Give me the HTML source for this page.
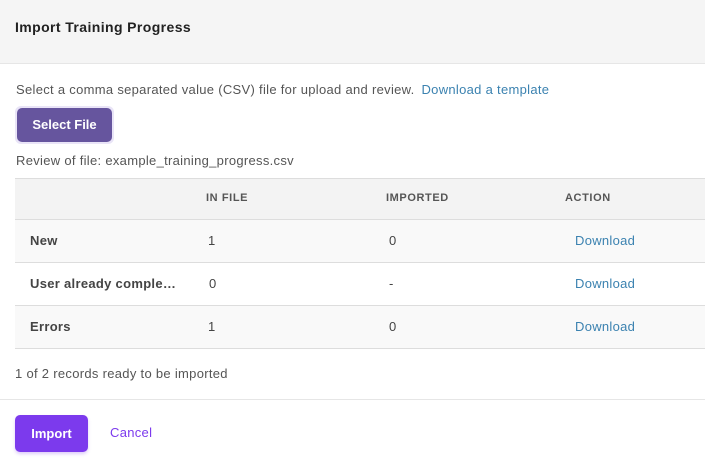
<!DOCTYPE html>
<html><head><style>
*{margin:0;padding:0;box-sizing:border-box}
body{width:705px;height:466px;overflow:hidden;background:#fff;font-family:"Liberation Sans",sans-serif;color:#444;position:relative;font-size:13px;letter-spacing:.3px}
.abs{position:absolute;white-space:nowrap}
.hdr{position:absolute;left:0;top:0;width:705px;height:64px;background:#f5f5f5;border-bottom:1px solid #e6e6e6}
.row{position:absolute;left:15px;width:690px;border-bottom:1px solid #ddd}
.th{font-size:11px;font-weight:bold;color:#555;letter-spacing:.6px}
.lnk{color:#3b82b0}
.lbl{font-weight:bold;color:#444}
</style></head><body>
<div class="hdr"></div>
<div class="abs" style="left:15px;top:19px;font-size:14px;font-weight:bold;color:#222;letter-spacing:.4px">Import Training Progress</div>
<div class="abs" style="left:16px;top:82px;color:#555">Select a comma separated value (CSV) file for upload and review. <span class="lnk" style="margin-left:3px">Download a template</span></div>
<div class="abs" style="left:15px;top:106px;width:99px;height:38px;border-radius:6px;background:#e9e4f7"></div>
<div class="abs" style="left:17px;top:108px;width:95px;height:34px;border-radius:5px;background:#66559e;color:#fff;font-weight:bold;text-align:center;line-height:34px;letter-spacing:0">Select File</div>
<div class="abs" style="left:16px;top:153px;color:#555">Review of file: example_training_progress.csv</div>
<div class="row" style="top:178px;height:42px;background:#f3f3f3;border-top:1px solid #ddd"></div>
<div class="row" style="top:220px;height:43px;background:#f9f9f9"></div>
<div class="row" style="top:263px;height:43px;background:#fff"></div>
<div class="row" style="top:306px;height:43px;background:#f9f9f9"></div>
<div class="abs th" style="left:206px;top:192px">IN FILE</div>
<div class="abs th" style="left:386px;top:192px">IMPORTED</div>
<div class="abs th" style="left:565px;top:192px">ACTION</div>
<div class="abs lbl" style="left:30px;top:233px">New</div>
<div class="abs" style="left:208px;top:233px">1</div>
<div class="abs" style="left:389px;top:233px">0</div>
<div class="abs lnk" style="left:575px;top:233px">Download</div>
<div class="abs lbl" style="left:30px;top:276px">User already comple…</div>
<div class="abs" style="left:209px;top:276px">0</div>
<div class="abs" style="left:389px;top:276px">-</div>
<div class="abs lnk" style="left:575px;top:276px">Download</div>
<div class="abs lbl" style="left:30px;top:319px">Errors</div>
<div class="abs" style="left:208px;top:319px">1</div>
<div class="abs" style="left:389px;top:319px">0</div>
<div class="abs lnk" style="left:575px;top:319px">Download</div>
<div class="abs" style="left:15px;top:366px;color:#555">1 of 2 records ready to be imported</div>
<div class="abs" style="left:0;top:399px;width:705px;height:1px;background:#e6e6e6"></div>
<div class="abs" style="left:15px;top:415px;width:73px;height:37px;border-radius:5px;background:#7c3aed;color:#fff;font-weight:bold;text-align:center;line-height:37px;letter-spacing:0;box-shadow:0 2px 3px rgba(124,58,237,.25)">Import</div>
<div class="abs" style="left:110px;top:425px;color:#7c3aed">Cancel</div>
</body></html>
